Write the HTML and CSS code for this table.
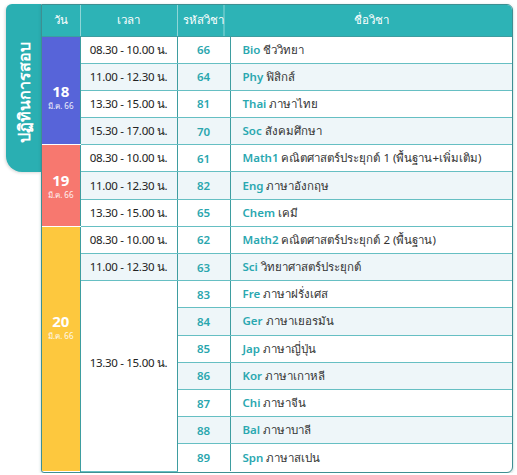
FILE: index.html
```html
<!DOCTYPE html>
<html lang="th">
<head>
<meta charset="utf-8">
<link rel="stylesheet" href="styles.css">
</head>
<body>
<div class="page">
  <div class="tab"><span class="tab-text">ปฏิทินการสอบ</span></div>
  <div class="card">
    <table class="sched">
      <colgroup>
        <col class="c-day"><col class="c-time"><col class="c-code"><col class="c-name">
      </colgroup>
      <thead>
        <tr>
          <th class="h-day">วัน</th>
          <th class="h-time">เวลา</th>
          <th class="h-code">รหัสวิชา</th>
          <th class="h-name">ชื่อวิชา</th>
        </tr>
      </thead>
      <tbody class="g18">
        <tr>
          <td class="day d18" rowspan="4"><div class="dnum">18</div><div class="dmon">มี.ค. 66</div></td>
          <td class="time">08.30 - 10.00 น.</td><td class="code">66</td><td class="name"><b>Bio</b> ชีววิทยา</td>
        </tr>
        <tr class="alt"><td class="time">11.00 - 12.30 น.</td><td class="code">64</td><td class="name"><b>Phy</b> ฟิสิกส์</td></tr>
        <tr><td class="time">13.30 - 15.00 น.</td><td class="code">81</td><td class="name"><b>Thai</b> ภาษาไทย</td></tr>
        <tr class="alt"><td class="time">15.30 - 17.00 น.</td><td class="code">70</td><td class="name"><b>Soc</b> สังคมศึกษา</td></tr>
      </tbody>
      <tbody class="g19">
        <tr>
          <td class="day d19" rowspan="3"><div class="dnum">19</div><div class="dmon">มี.ค. 66</div></td>
          <td class="time">08.30 - 10.00 น.</td><td class="code">61</td><td class="name"><b>Math1</b> คณิตศาสตร์ประยุกต์ 1 (พื้นฐาน+เพิ่มเติม)</td>
        </tr>
        <tr class="alt"><td class="time">11.00 - 12.30 น.</td><td class="code">82</td><td class="name"><b>Eng</b> ภาษาอังกฤษ</td></tr>
        <tr><td class="time">13.30 - 15.00 น.</td><td class="code">65</td><td class="name"><b>Chem</b> เคมี</td></tr>
      </tbody>
      <tbody class="g20">
        <tr>
          <td class="day d20" rowspan="9"><div class="dnum">20</div><div class="dmon">มี.ค. 66</div></td>
          <td class="time">08.30 - 10.00 น.</td><td class="code">62</td><td class="name"><b>Math2</b> คณิตศาสตร์ประยุกต์ 2 (พื้นฐาน)</td>
        </tr>
        <tr class="alt"><td class="time">11.00 - 12.30 น.</td><td class="code">63</td><td class="name"><b>Sci</b> วิทยาศาสตร์ประยุกต์</td></tr>
        <tr>
          <td class="time tall" rowspan="7">13.30 - 15.00 น.</td><td class="code">83</td><td class="name"><b>Fre</b> ภาษาฝรั่งเศส</td>
        </tr>
        <tr class="alt"><td class="code">84</td><td class="name"><b>Ger</b> ภาษาเยอรมัน</td></tr>
        <tr><td class="code">85</td><td class="name"><b>Jap</b> ภาษาญี่ปุ่น</td></tr>
        <tr class="alt"><td class="code">86</td><td class="name"><b>Kor</b> ภาษาเกาหลี</td></tr>
        <tr><td class="code">87</td><td class="name"><b>Chi</b> ภาษาจีน</td></tr>
        <tr class="alt"><td class="code">88</td><td class="name"><b>Bal</b> ภาษาบาลี</td></tr>
        <tr><td class="code">89</td><td class="name"><b>Spn</b> ภาษาสเปน</td></tr>
      </tbody>
    </table>
  </div>
</div>
</body>
</html>
```
FILE: styles.css
```css
* { box-sizing: border-box; }
html, body { margin: 0; padding: 0; background: #ffffff; }
body {
  font-family: "Noto Sans", "Open Sans", sans-serif;
  color: #2b2b2b;
}
.page {
  display: flex;
  align-items: flex-start;
  padding: 4px 0 0 6px;
}
.tab {
  width: 35px;
  height: 168px;
  flex: 0 0 auto;
  background: #2aafb2;
  border-radius: 6px 0 0 16px;
  display: flex;
  align-items: center;
  justify-content: center;
  overflow: hidden;
  box-shadow: -1px 1px 3px rgba(0,0,0,0.15);
}
.tab-text {
  writing-mode: vertical-rl;
  transform: rotate(180deg);
  color: #ffffff;
  font-size: 16px;
  font-weight: 600;
  line-height: 22px;
  white-space: nowrap;
  margin-top: 8px;
}
.card {
  width: 472px;
  border: 1px solid #3e8f92;
  border-radius: 0 6px 6px 3px;
  overflow: hidden;
  box-shadow: 0 1px 3px rgba(40,110,115,0.35);
  background: #fff;
}
.sched {
  width: 100%;
  border-collapse: collapse;
  table-layout: fixed;
}
.c-day { width: 38px; }
.c-time { width: 97px; }
.c-code { width: 53px; }
.c-name { width: auto; }
thead th {
  background: #2db3b6;
  color: #ffffff;
  font-weight: 500;
  font-size: 11.5px;
  height: 31px;
  padding: 0;
  text-align: center;
  border-right: 1px solid #8fd6d7;
  border-bottom: 1px solid #3e9da0;
}
thead th.h-code {
  border-right: none;
  background: linear-gradient(to right, #2db3b6 46px, #8fd6d7 46px, #8fd6d7 47px, #2db3b6 47px);
}
thead th.h-name { border-right: none; }
tbody td {
  height: 27.2px;
  padding: 0;
  font-size: 11.5px;
  border-bottom: 1px solid #66bfc3;
  border-right: 1px solid #3e9da0;
  vertical-align: middle;
}
tbody tr.alt td { background: #eef6f9; }
tbody td.name { border-right: none; padding-left: 12px; color: #333; white-space: nowrap; }
.name b { color: #2aa8b0; font-weight: 600; }
td.time { text-align: center; color: #222; letter-spacing: -0.3px; }
td.code { text-align: center; color: #2aa6ae; font-weight: 600; }
td.day {
  text-align: center;
  color: #ffffff;
  border-right: 1px solid #3e9da0;
  border-bottom: 1px solid #ffffff;
}
td.d18 { background: #5764d9; padding-top: 14px; }
td.d19 { background: #f7786f; }
td.d20 { background: #fdc83e; padding-bottom: 44px; border-bottom: none; }
td.tall { background: #fff; padding-bottom: 26px; }
tbody.g20 tr:last-child td { border-bottom: none; }
.dnum { font-size: 15px; font-weight: 700; line-height: 18px; }
.dmon { font-size: 8px; line-height: 12px; opacity: 0.9; }
```
